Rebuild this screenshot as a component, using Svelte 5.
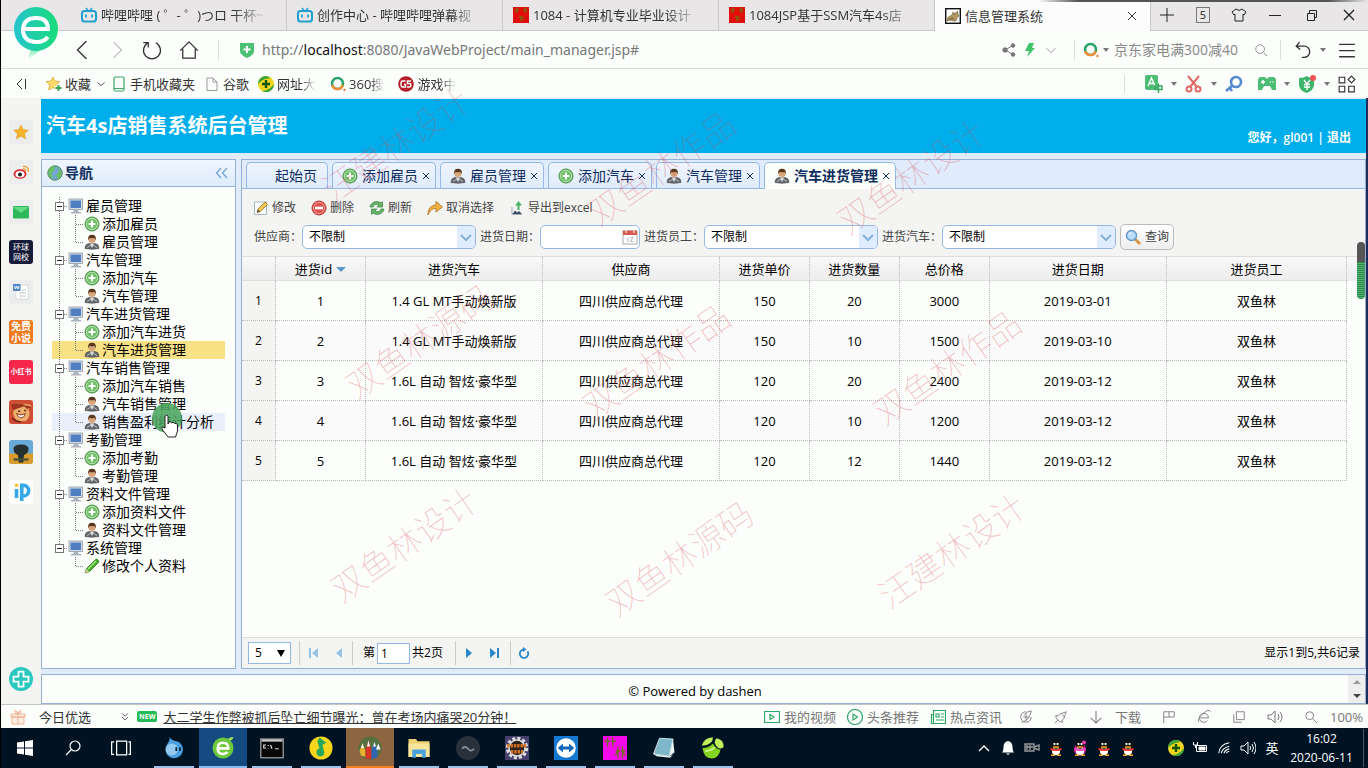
<script>
  const browserTabs = [
    { title: '哔哩哔哩 ( ゜- ゜)つロ 干杯~', icon: 'bili' },
    { title: '创作中心 - 哔哩哔哩弹幕视', icon: 'bili' },
    { title: '1084 - 计算机专业毕业设计', icon: 'redbook' },
    { title: '1084JSP基于SSM汽车4s店', icon: 'redbook' },
  ];

  const bookmarks = [
    { title: '手机收藏夹', icon: 'phone' },
    { title: '谷歌', icon: 'page' },
    { title: '网址大', icon: 'shield360', fade: true },
    { title: '360搜', icon: 'so', fade: true },
    { title: '游戏中', icon: 'game', fade: true },
  ];

  const tree = [
    { title: '雇员管理', items: [{ title: '添加雇员', icon: 'add' }, { title: '雇员管理', icon: 'user' }] },
    { title: '汽车管理', items: [{ title: '添加汽车', icon: 'add' }, { title: '汽车管理', icon: 'user' }] },
    { title: '汽车进货管理', items: [{ title: '添加汽车进货', icon: 'add' }, { title: '汽车进货管理', icon: 'user', selected: true }] },
    {
      title: '汽车销售管理',
      items: [
        { title: '添加汽车销售', icon: 'add' },
        { title: '汽车销售管理', icon: 'user' },
        { title: '销售盈利统计分析', icon: 'user', hover: true },
      ],
    },
    { title: '考勤管理', items: [{ title: '添加考勤', icon: 'add' }, { title: '考勤管理', icon: 'user' }] },
    { title: '资料文件管理', items: [{ title: '添加资料文件', icon: 'add' }, { title: '资料文件管理', icon: 'user' }] },
    { title: '系统管理', items: [{ title: '修改个人资料', icon: 'pencil' }] },
  ];

  const tabs = [
    { title: '添加雇员', icon: 'add' },
    { title: '雇员管理', icon: 'user' },
    { title: '添加汽车', icon: 'add' },
    { title: '汽车管理', icon: 'user' },
    { title: '汽车进货管理', icon: 'user' },
  ];
  let activeTab = $state(4);

  const tools = [
    { title: '修改', icon: 'edit' },
    { title: '删除', icon: 'remove' },
    { title: '刷新', icon: 'reload' },
    { title: '取消选择', icon: 'redo' },
    { title: '导出到excel', icon: 'export' },
  ];

  const rows = [
    [1, '1.4 GL MT手动焕新版', '四川供应商总代理', 150, 20, 3000, '2019-03-01', '双鱼林'],
    [2, '1.4 GL MT手动焕新版', '四川供应商总代理', 150, 10, 1500, '2019-03-10', '双鱼林'],
    [3, '1.6L 自动 智炫·豪华型', '四川供应商总代理', 120, 20, 2400, '2019-03-12', '双鱼林'],
    [4, '1.6L 自动 智炫·豪华型', '四川供应商总代理', 120, 10, 1200, '2019-03-12', '双鱼林'],
    [5, '1.6L 自动 智炫·豪华型', '四川供应商总代理', 120, 12, 1440, '2019-03-12', '双鱼林'],
  ];

  const sideApps = ['star', 'weibo', 'mail', 'school', 'word', 'novel', 'red', 'hero', 'oak', 'ip'];
  const taskApps = ['drop', 'e360', 'cmd', 'music', 'pencils', 'folder', 'wave', 'ide', 'teamviewer', 'magenta', 'notebook', 'lime'];

  const marks = [
    { text: '汪建林设计', x: 395, y: 144 },
    { text: '双鱼林作品', x: 660, y: 168 },
    { text: '双鱼林设计', x: 910, y: 176 },
    { text: '双鱼林源码', x: 418, y: 341 },
    { text: '双鱼林作品', x: 655, y: 361 },
    { text: '双鱼林作品', x: 946, y: 367 },
    { text: '双鱼林设计', x: 403, y: 544 },
    { text: '双鱼林源码', x: 678, y: 558 },
    { text: '汪建林设计', x: 951, y: 550 },
  ];
</script>

{#snippet icon(name, size = 16)}
  <svg class="icon" width={size} height={size} viewBox="0 0 16 16" fill="none" aria-hidden="true">
    {#if name === 'bili'}
      <path d="M5 1l2 2.5M11 1L9 3.5" stroke="#1f9fd0" stroke-width="1.5" />
      <rect x="1" y="4" width="14" height="10.500" rx="2.500" stroke="#1f9fd0" stroke-width="2" />
      <path d="M5 7.500v3M11 7.500v3" stroke="#1f9fd0" stroke-width="1.800" />
    {:else if name === 'redbook'}
      <rect width="16" height="16" fill="#e01008" />
      <path d="M2 2h4M2 4h3M4 2v4M10 2h4M11 4h3M12 2v4M6 10h5M8 9v5M7 12h4" stroke="#7a6a10" stroke-width="1.200" />
    {:else if name === 'cat'}
      <rect x=".7" y=".7" width="14.600" height="14.600" fill="#fff" stroke="#111" stroke-width="1.400" />
      <path d="M2 13q0-4 3-5l2-1 1-3 2 1.500 2.500-2.500.5 3 1 2-2 2-1 3H8l-3-1z" fill="#b39a62" stroke="#6e5a33" stroke-width=".6" />
      <path d="M4 12l3-2 2 1M9 6.500h1" stroke="#4a3d22" stroke-width=".8" />
    {:else if name === 'phone'}
      <rect x="3" y="1" width="10" height="14" rx="1.500" stroke="#3aa864" stroke-width="1.200" />
      <path d="M3 12.500h10" stroke="#3aa864" />
    {:else if name === 'page'}
      <path d="M3 2h6l4 4v8.500H3zM9 2v4h4" stroke="#999" />
    {:else if name === 'shield360'}
      <circle cx="8" cy="8" r="8" fill="#f2d51c" />
      <path d="M8 0a8 8 0 0 0-8 8c3-4 8-6 12-5.500C11 1 9.500 0 8 0zM16 8a8 8 0 0 1-12 7c5 0 9-3 12-7z" fill="#3aa53c" />
      <path d="M8 4v8M4 8h8" stroke="#151" stroke-width="2.400" />
    {:else if name === 'so'}
      <circle cx="7.500" cy="7.500" r="5.500" stroke="#2aa36a" stroke-width="2.600" />
      <path d="M2.200 9a5.500 5.500 0 0 0 10.600 0" stroke="#f09038" stroke-width="2.600" />
      <circle cx="14.500" cy="14" r="1.200" fill="#f08030" />
    {:else if name === 'game'}
      <circle cx="8" cy="8" r="7.800" fill="#b3202a" />
      <path d="M7.500 5H4.500Q3 5 3 8t1.500 3h3V8.500H6M13 5H9.500v2.500h2Q13 7.500 13 9.200T11.300 11H9" stroke="#fff" stroke-width="1.400" />
    {:else if name === 'favadd'}
      <path d="M7 1l2 4 5 .6-3.600 3.200 1 5L7 11.500 2.600 14l1-5L0 5.600 5 5z" fill="#fbd96a" stroke="#dba93a" stroke-width=".8" />
      <path d="M12.500 8.500v7M9 12h7" stroke="#fff" stroke-width="4" />
      <path d="M12.500 9v6M9.500 12h6" stroke="#3aa55a" stroke-width="2" />
    {:else if name === 'add'}
      <circle cx="8" cy="8" r="7" fill="#6fbf68" stroke="#4b8f49" />
      <circle cx="8" cy="8" r="5.600" stroke="#c9ebc2" stroke-width=".8" />
      <path d="M8 4.500v7M4.500 8h7" stroke="#fff" stroke-width="2" />
    {:else if name === 'remove'}
      <circle cx="8" cy="8" r="7" fill="#dc5149" stroke="#b63a33" />
      <circle cx="8" cy="8" r="5.600" stroke="#f5b5ae" stroke-width=".8" />
      <path d="M4 8h8" stroke="#fff" stroke-width="2.600" />
    {:else if name === 'user'}
      <path d="M1 14.500Q1 10 5 9.500h6q4 .5 4 5-7 1.500-14 0z" fill="#66696d" stroke="#44474a" stroke-width=".6" />
      <path d="M6 9.500l2 4.500 2-4.500z" fill="#eee" />
      <circle cx="8" cy="5.500" r="3.600" fill="#d9a67c" />
      <path d="M4.200 6Q3.500 .8 8 .8T11.800 6Q11 5.500 10.500 3.800 8 4.800 5.500 3.800 5 5.500 4.200 6z" fill="#59381d" />
      <path d="M3 13.500l4-2.500h2l4 2.500" stroke="#c2c4c6" stroke-width=".9" />
    {:else if name === 'monitor'}
      <rect x="1" y="1" width="13.500" height="10.500" fill="#d5dce4" stroke="#8f9aa8" stroke-width=".8" />
      <rect x="2.500" y="2.500" width="10.500" height="7.500" fill="#4f7fc0" />
      <path d="M6 12h4l1 2h2v1.500H3V14h2z" fill="#a9b4bf" />
    {:else if name === 'pencil'}
      <path d="M1 15l1.500-4.500L11.500 1.500q1-1 2.500 .5t.5 2.500L5.500 13.500z" fill="#47ad2a" stroke="#2b7d18" stroke-width=".8" />
      <path d="M4 11l8-8" stroke="#a9e78c" stroke-width="1.300" />
      <path d="M1 15l1.500-4 2.500 2.500z" fill="#e9d2a0" />
    {:else if name === 'edit'}
      <path d="M1.500 2h12v12.500h-12z" fill="#fff" stroke="#a5b5c5" />
      <path d="M4 12.500l1-3.500L12 2l2.500 2.500L7.500 11.500z" fill="#f3c750" stroke="#96702a" stroke-width=".8" />
      <path d="M4 12.500l1-3 2 2z" fill="#444" />
    {:else if name === 'reload'}
      <path d="M1 7c1-5 7-7 11-4l1.500-1.500V7H8l2-2C7 3.500 5 4.500 4 7zM15 9c-1 5-7 7-11 4l-1.500 1.500V9H8l-2 2c3 1.500 5 .5 6-2z" fill="#67b465" stroke="#33843c" stroke-width=".7" />
    {:else if name === 'redo'}
      <path d="M1 15c0-7 3-9.500 8-10V1.500L15.500 7 9 12V8.500c-4 0-6 2-8 6.500z" fill="#f2b441" stroke="#ab6c1d" stroke-width=".8" />
    {:else if name === 'export'}
      <path d="M3 7v7.500h10" stroke="#9badbb" />
      <path d="M8.500 10V5.500H6L9.500 1 13 5.500h-2.500V10z" fill="#49b466" />
      <path d="M3.500 14l2.500-3.500 2 2 2-1.500 3 3z" fill="#3e4d61" />
    {:else if name === 'search'}
      <path d="M10 10l5 5" stroke="#d59442" stroke-width="2.800" />
      <circle cx="6.500" cy="6.500" r="5" fill="#b8dcf5" stroke="#5f98c8" stroke-width="1.400" />
      <path d="M4 6q0-2 2.500-2.300" stroke="#fff" />
    {:else if name === 'calendar'}
      <rect x="1" y="2" width="14" height="13" fill="#fff" stroke="#a8a8a8" />
      <path d="M1 1.500h14V6H1z" fill="#d65a50" />
      <path d="M4 1v3M12 1v3" stroke="#fff" />
      <path d="M6 8.500v4.500M8.500 8.500h2.500l-2.500 4h3" stroke="#b5b5b5" />
    {:else if name === 'globe'}
      <circle cx="8" cy="8" r="7.200" fill="#75a7d5" stroke="#4a8a4e" />
      <path d="M2 4q3-4 6-2l-1 4-3 2 2 4-2 1Q0 9 2 4zM11 3l3 3v5l-3 3-2-4 3-3z" fill="#6abf5e" />
    {:else if name === 'chev'}
      <path d="M3 6l5 5 5-5" stroke="#84b3da" stroke-width="2" />
    {:else if name === 'weibo'}
      <ellipse cx="7" cy="10" rx="6.500" ry="4.800" fill="#e0303a" />
      <ellipse cx="7" cy="10.300" rx="4.500" ry="3.200" fill="#fff" />
      <circle cx="7" cy="10.500" r="2" fill="#222" />
      <path d="M10 5q3-.5 2.600 2.500M10 2.500q6-.5 5.300 5.500" stroke="#f0a02c" stroke-width="1.300" />
    {:else if name === 'mail'}
      <rect y="2" width="16" height="12.500" rx="1" fill="#2eb85c" />
      <path d="M0 3l8 6 8-6z" fill="#65db83" />
    {:else if name === 'word'}
      <rect x="3" y="1" width="12" height="14" fill="#fff" stroke="#ccc" stroke-width=".6" />
      <path d="M9 6h4M6 9h7M6 12h7" stroke="#bcc5cc" />
      <rect width="7.500" height="7" fill="#4e86c8" />
      <path d="M1.500 2l1 3 1.200-3L5 5l1-3" stroke="#fff" stroke-width=".9" />
    {:else if name === 'star'}
      <path d="M8 1l2.200 4.600 5 .6-3.700 3.500 1 5L8 12.200 3.500 14.700l1-5L.8 6.200l5-.6z" fill="#f7b32b" stroke="#e09a1c" stroke-width=".6" />
    {:else if name === 'hero'}
      <rect width="16" height="16" rx="2" fill="#cf4d33" />
      <path d="M1 3q4-2 8 0 4-1 6 1l-2 2q2 5-2 8H6Q2 11 3 6z" fill="#edb06c" />
      <path d="M1 3q5-2 11 1-6 1-9 3zM10 4q3-1 5 1l-3 1z" fill="#9c3420" />
      <path d="M5 9q3 2 6 0-1 3-3 3T5 9z" fill="#fff" stroke="#8c2f1a" stroke-width=".6" />
      <path d="M6 7.500h1.500M10 7h1.500M2 12q3 3 6 2.500" stroke="#6b2414" stroke-width="1" />
    {:else if name === 'oak'}
      <rect width="16" height="16" rx="2" fill="#69a9d8" />
      <path d="M0 9h16v5a2 2 0 0 1-2 2H2a2 2 0 0 1-2-2z" fill="#d89b2c" />
      <path d="M3 6q0-3 5-3t5 3-3 4l-.5 5h-3L6 10Q3 9 3 6z" fill="#26302f" />
      <path d="M3 13h10" stroke="#4a4f3a" stroke-width="1.500" />
    {:else if name === 'ip'}
      <rect width="16" height="16" rx="2" fill="#fff" />
      <path d="M5 6v6" stroke="#36a8e8" stroke-width="2.400" />
      <circle cx="5" cy="3.500" r="1.200" fill="#f5c02c" />
      <path d="M8.500 14V3.500h1a3.600 3.600 0 0 1 0 7.200" stroke="#36a8e8" stroke-width="2.400" />
    {:else if name === 'drop'}
      <path d="M5 .5q1 2.500 5 3a5.800 5.800 0 1 1-6.500 2Q5.500 3 5 .5z" fill="#4a9fe0" />
      <circle cx="6.500" cy="9" r="4" fill="#b5def6" opacity=".7" />
      <path d="M9.500 7.500v2.500M12 7.500v2.500" stroke="#123" stroke-width="1.100" />
    {:else if name === 'e360'}
      <circle cx="8" cy="8" r="7" fill="#6cc93c" />
      <path d="M4.500 8.300h7q0-3.800-3.500-3.800T4.500 8.300 8 12q2 0 3-1.300" stroke="#fff" stroke-width="1.800" />
      <path d="M11 2q3-2 4-1-1 2-2 2z" fill="#9be05c" />
    {:else if name === 'cmd'}
      <rect x=".5" y="2" width="15" height="12.500" fill="#080808" stroke="#888" />
      <path d="M1 3h14" stroke="#ccc" stroke-width="1.500" />
      <path d="M4 6H2.500v2H4M5.500 6v.6M5.500 8v.4M7 6l1 2.500M10 8.500h2.500" stroke="#ddd" stroke-width=".8" />
    {:else if name === 'music'}
      <circle cx="8" cy="8" r="7.700" fill="#f8d51d" />
      <path d="M7 1l4.500 3.500L9 6l1.200 5a2.600 2.600 0 1 1-3.200-2.600L5.500 3.500z" fill="#25a85c" />
    {:else if name === 'pencils'}
      <circle cx="8" cy="8" r="7.700" fill="#55713f" />
      <path d="M1 10l2-5 2 5v4l-3-1z" fill="#e8b12c" />
      <path d="M5 9l2-6 2 6v6.500L5 15z" fill="#d63426" />
      <path d="M9 9l2-5 2 5v5l-4 1.500z" fill="#2d67b4" />
      <path d="M2 8l1-3 1 3M6 7l1-4 1 4M10 7l1-3 1 3M12 9l1.500-4L15 9" fill="#fff" />
    {:else if name === 'folder'}
      <path d="M1 2h5l1 1.500h8V14H1z" fill="#f1d273" />
      <path d="M1 5h14v9H1z" fill="#f9e49b" />
      <path d="M3.500 14.500V9h9v5.500h-2.500V12H6v2.500z" fill="#4aa3dc" />
    {:else if name === 'wave'}
      <circle cx="8" cy="8" r="8" fill="#28313c" />
      <path d="M4 8.500q2-2.500 4 0t4 0" stroke="#8894a0" stroke-width="1.100" />
    {:else if name === 'ide'}
      <rect width="16" height="16" fill="#47406c" />
      <circle cx="8" cy="8" r="6.300" stroke="#ddd" stroke-width="2.400" stroke-dasharray="2 1.300" />
      <circle cx="8" cy="8" r="5.300" fill="#2a2020" stroke="#ddd" />
      <path d="M1.500 6.500h13M4 10.500h8" stroke="#d97324" stroke-width="2.400" stroke-dasharray="1.600 .6" />
    {:else if name === 'teamviewer'}
      <rect width="16" height="16" fill="#1479d0" />
      <circle cx="8" cy="8" r="6.500" fill="#fff" />
      <path d="M2.500 8L6 5v2h4V5l3.500 3L10 11V9H6v2z" fill="#1168b8" />
    {:else if name === 'magenta'}
      <rect width="16" height="16" fill="#f508ea" />
      <path d="M3 1v6M1 3.500h4M6.500 1v6M5.500 3.500h3M10 7v8M13 7v8M8.500 10h3M12 10h3M8 13l2-3M13 10l2 3" stroke="#6e6e1a" stroke-width=".9" />
    {:else if name === 'notebook'}
      <path d="M5 1.500l9 .5-2.500 11.500L1 12z" fill="#7fb7ca" stroke="#d8e8ee" stroke-width=".6" />
      <path d="M14 2l1 9-3.500 2.500z" fill="#edf4f5" />
      <path d="M1 12l10.500 1.500L14 12.500l-2 2L3 13.500z" fill="#e4ecec" />
    {:else if name === 'lime'}
      <path d="M1 8q4 0 7-3 2 4 5 4-1 6-6 6T1 8z" fill="#84d320" />
      <path d="M.5 6.500Q2 1 8 .8 8 6 .5 6.500zM10.500 1.500q5 1 4.500 6-3 2-5-1t.5-5z" fill="#bdf05a" />
      <path d="M3 10q4 0 6-2.500" stroke="#d8f79a" stroke-width="1.200" />
    {:else if name === 'qq' || name === 'qqpink'}
      <ellipse cx="8" cy="9.500" rx="6" ry="6" fill={name === 'qq' ? '#111' : '#e01fa0'} />
      <ellipse cx="8" cy="11.500" rx="4" ry="3.700" fill="#fff" />
      <circle cx="8" cy="4.500" r="4.300" fill="#111" />
      <path d="M6.500 3v2M9.500 3v2" stroke="#fff" stroke-width="1.800" />
      <path d="M5 7h6" stroke="#f3a81c" stroke-width="1.500" />
      <path d="M2.500 9q5.500 2 11 0" stroke={name === 'qq' ? '#e03028' : '#ff4ac0'} stroke-width="2.200" />
      <path d="M3 15.200h4M9 15.200h4" stroke="#f3a81c" stroke-width="1.600" />
      {#if name === 'qqpink'}<circle cx="12" cy="2.500" r="2" fill="#f03aa8" />{/if}
    {/if}
  </svg>
{/snippet}

<!-- plain outline glyphs, coloured by the parent -->
{#snippet line(d, size = 16, width = 1)}
  <svg class="icon" width={size} height={size} viewBox="0 0 16 16" fill="none" stroke="currentColor" stroke-width={width} aria-hidden="true">
    <path {d} />
  </svg>
{/snippet}

{#snippet guide(d)}
  <svg class="icon" width="16" height="18" viewBox="0 0 16 18" fill="none" stroke="#777" stroke-dasharray="1 1" aria-hidden="true">
    <path {d} />
  </svg>
{/snippet}

{#snippet combo(id, label)}
  <label for={id}>{label}：</label>
  <span class="combo">
    <select {id}><option>不限制</option></select>
    <span class="combo-arrow">{@render icon('chev')}</span>
  </span>
{/snippet}

<div class="screen">
  <header class="tabstrip">
    {#each browserTabs as tab}
      <button class="btab">{@render icon(tab.icon)}<span class="fade">{tab.title}</span></button>
    {/each}
    <button class="btab current">
      {@render icon('cat')}<span class="grow">信息管理系统</span>
      {@render line('M4 4l8 8M12 4l-8 8', 16, 1)}
    </button>
    <div class="window-tools">
      <button aria-label="新标签页">{@render line('M8 1v14M1 8h14')}</button>
      <button class="count">5</button>
      <button aria-label="皮肤">{@render line('M5 2L1 5l2 3 1-1v7h8V7l1 1 2-3-4-3Q8 5 5 2z', 16, 1)}</button>
      <button aria-label="最小化">{@render line('M2 8.500h12')}</button>
      <button aria-label="还原">{@render line('M3.500 6.500h7v7h-7zM5.500 6.500v-3h7v7h-2')}</button>
      <button aria-label="关闭">{@render line('M3 3l10 10M13 3L3 13', 16, 1.4)}</button>
    </div>
  </header>

  <div class="address">
    <div class="nav-buttons">
      <button aria-label="后退">{@render line('M12 0L4 8l8 8', 18, 1.2)}</button>
      <button class="off" aria-label="前进">{@render line('M5 1l7 7-7 7', 18)}</button>
      <button aria-label="刷新">{@render line('M5 2.200a6.800 6.800 0 1 0 6 0M5 6V2H1', 20)}</button>
      <button aria-label="主页">{@render line('M1 8.500L8 1.500l7 7M3 7v7.500h10V7', 20)}</button>
    </div>
    <svg class="icon" width="14" height="16" viewBox="0 0 14 16" aria-hidden="true">
      <path d="M0 1h14v8q0 4-7 7-7-3-7-7z" fill="#4cc174" />
      <path d="M7 4v7M3.500 7.500h7" stroke="#fff" stroke-width="2" />
    </svg>
    <div class="url">http://<b>localhost</b>:8080/JavaWebProject/main_manager.jsp#</div>
    <div class="share">
      <svg class="icon" width="14" height="14" viewBox="0 0 14 14" fill="#777" stroke="#777" aria-hidden="true">
        <path d="M11 2.500L3 7l8 4.500" fill="none" /><circle cx="11" cy="2.500" r="1.800" /><circle cx="3" cy="7" r="2.200" /><circle cx="11" cy="11.500" r="1.800" />
      </svg>
      <svg class="icon" width="12" height="14" viewBox="0 0 12 14" aria-hidden="true"><path d="M5 0h5L8 5h3L3 14l2-6H1z" fill="#3fc46a" /></svg>
      {@render line('M3 6l5 5 5-5', 14)}
    </div>
    <div class="hot">
      {@render icon('so')}<i class="caret"></i>
      <span>京东家电满300减40</span>
      {@render line('M11 11l4 4M12 7a5 5 0 1 1-10 0 5 5 0 0 1 10 0z', 14)}
    </div>
    <div class="menu">
      {@render line('M5 1L2 4.500l3.500 3M2 4.500h7a4.500 4.500 0 0 1 0 10H7', 18, 1.2)}
      <i class="caret"></i>
      {@render line('M1 3h14M1 8.500h14M1 14h14', 18, 1.2)}
    </div>
  </div>

  <nav class="bookmarks">
    {@render line('M9 3L4 8l5 5M12.500 3v10', 16)}
    <a class="fav" href="#fav">{@render icon('favadd')}收藏</a>
    {@render line('M3 6l5 4 5-4', 12)}
    {#each bookmarks as mark}
      <a href="#bookmark" class:long-title={mark.fade}>{@render icon(mark.icon)}<span class:fade-end={mark.fade}>{mark.title}</span></a>
    {/each}
    <div class="plugins">
      <svg class="icon" width="18" height="18" viewBox="0 0 18 18" fill="none" aria-hidden="true">
        <rect width="13" height="15" rx="2" fill="#4cbd74" /><path d="M3 11L6.500 3 10 11M4.500 8.500h4" stroke="#fff" stroke-width="1.500" />
        <path d="M10 11h7v3.500h-7zM13.500 8.500V18" stroke="#3aa862" stroke-width="1.500" />
      </svg>
      <i class="caret"></i>
      <svg class="icon" width="18" height="18" viewBox="0 0 18 18" fill="none" stroke="#e06a66" stroke-width="2" aria-hidden="true">
        <path d="M3 1l9 11M14 1L5 12" /><circle cx="4" cy="14" r="2.500" /><circle cx="13" cy="14" r="2.500" />
      </svg>
      <i class="caret"></i>
      <svg class="icon key" width="18" height="18" viewBox="0 0 18 18" fill="none" stroke="#5589d0" stroke-width="2.600" aria-hidden="true">
        <circle cx="11" cy="7" r="5" /><path d="M7 11l-6 5M4 12l3 4" />
      </svg>
      <svg class="icon" width="18" height="16" viewBox="0 0 18 16" aria-hidden="true">
        <path d="M2 1h5l2 2 2-2h5l2 2v11h-4l-2-4H6l-2 4H0V3z" fill="#4cbd74" /><path d="M5 4v4M3 6h4M12 6h1M14.500 6h1" stroke="#fff" stroke-width="1.500" />
      </svg>
      <i class="caret"></i>
      <svg class="icon" width="18" height="18" viewBox="0 0 18 18" fill="none" aria-hidden="true">
        <path d="M1 3q5 0 8-2 2 2 7 2v7q0 5-7.500 8Q1 15 1 10z" fill="#3fb56a" /><path d="M6 5l3 4 3-4M9 9v6M6 9.500h6M6 12h6" stroke="#fff" stroke-width="1.300" /><circle cx="15" cy="3" r="3" fill="#f05555" />
      </svg>
      <i class="caret"></i>
      {@render line('M1 2h5v5H1zM1 10h5v5H1zM9.500 10h5v5h-5zM12 1l3 3-3 3-3-3z', 18)}
    </div>
  </nav>

  <div class="workspace">
    <aside class="dock">
      {#each sideApps as app}
        <button class="app {app}" aria-label={app}>
          {#if app === 'school'}
            环球<br />网校
          {:else if app === 'novel'}
            免费<br />小说
          {:else if app === 'red'}
            小红书
          {:else}
            {@render icon(app, app === 'hero' || app === 'oak' || app === 'ip' ? 24 : 16)}
          {/if}
        </button>
      {/each}
      <button class="app plus" aria-label="添加">
        {@render line('M6 2h4v4h4v4h-4v4H6v-4H2V6h4z', 20, 1.4)}
      </button>
    </aside>

    <main>
      <div class="banner">
        <h1>汽车4s店销售系统后台管理</h1>
        <p>您好，gl001 | <a href="#logout">退出</a></p>
      </div>

      <div class="columns">
        <section class="panel nav-panel">
          <h2>{@render icon('globe')}<span class="grow">导航</span>
            <button aria-label="收起">{@render line('M7 3L2.500 8 7 13M13 3L8.500 8l4.500 5', 16, 1.4)}</button>
          </h2>
          <ul class="tree">
            {#each tree as group, g}
              <li>
                <div class="node">
                  <svg class="icon" width="16" height="18" viewBox="0 0 16 18" fill="none" aria-hidden="true">
                    <path d={g === tree.length - 1 ? 'M7.500 0v5M12 9.500h4' : 'M7.500 0v18M12 9.500h4'} stroke="#777" stroke-dasharray="1 1" />
                    <rect x="3.500" y="5.500" width="8" height="8" fill="#fff" stroke="#777" /><path d="M5 9.500h5" stroke="#222" />
                  </svg>
                  {@render icon('monitor')}<span>{group.title}</span>
                </div>
                <ul>
                  {#each group.items as item, i}
                    <li class="node" class:selected={item.selected} class:hover={item.hover}>
                      {@render guide(g === tree.length - 1 ? '' : 'M7.500 0v18')}
                      {@render guide(i === group.items.length - 1 ? 'M7.500 0v9.500h8.500' : 'M7.500 0v18M8 9.500h8')}
                      {@render icon(item.icon)}<a href="#node">{item.title}</a>
                    </li>
                  {/each}
                </ul>
              </li>
            {/each}
          </ul>
        </section>

        <section class="panel center">
          <div class="tabs">
            <button class="tab home">起始页</button>
            {#each tabs as tab, i}
              <button class="tab" class:active={i === activeTab} onclick={() => (activeTab = i)}>
                {@render icon(tab.icon)}<span>{tab.title}</span>
                {@render line('M2 2l12 12M14 2L2 14', 8, 2)}
              </button>
            {/each}
          </div>

          <div class="toolbar">
            {#each tools as tool}
              <button>{@render icon(tool.icon)}{tool.title}</button>
            {/each}
          </div>

          <form class="filters" onsubmit={(e) => e.preventDefault()}>
            {@render combo('supplier', '供应商')}
            <label for="date">进货日期：</label>
            <span class="datebox"><input id="date" type="text" />{@render icon('calendar')}</span>
            {@render combo('employee', '进货员工')}
            {@render combo('car', '进货汽车')}
            <button class="query">{@render icon('search')}查询</button>
          </form>

          <div class="grid">
            <table>
              <colgroup>
                <col class="num" /><col class="short" /><col class="long" /><col class="long" />
                <col class="short" /><col class="short" /><col class="short" /><col class="long" /><col />
              </colgroup>
              <thead>
                <tr>
                  <th></th>
                  <th>进货id<i class="sort"></i></th>
                  <th>进货汽车</th><th>供应商</th><th>进货单价</th><th>进货数量</th><th>总价格</th><th>进货日期</th><th>进货员工</th>
                </tr>
              </thead>
              <tbody>
                {#each rows as row, i}
                  <tr class:alt={i % 2 === 1}>
                    <td class="rownum">{i + 1}</td>
                    {#each row as cell}<td>{cell}</td>{/each}
                  </tr>
                {/each}
              </tbody>
            </table>
          </div>

          <div class="pager">
            <span class="size"><select aria-label="每页记录数"><option>5</option></select><i></i></span>
            <hr />
            <button class="dim" aria-label="第一页"><svg width="12" height="12" viewBox="0 0 12 12"><path d="M2 1h2v10H2zM11 1v10L5 6z" fill="currentColor" /></svg></button>
            <button class="dim" aria-label="上一页"><svg width="12" height="12" viewBox="0 0 12 12"><path d="M9 1v10L3 6z" fill="currentColor" /></svg></button>
            <hr />
            <label for="page">第</label><input id="page" type="text" value="1" /><span>共2页</span>
            <hr class="wide" />
            <button aria-label="下一页"><svg width="12" height="12" viewBox="0 0 12 12"><path d="M3 1v10l6-5z" fill="currentColor" /></svg></button>
            <button aria-label="最后一页"><svg width="12" height="12" viewBox="0 0 12 12"><path d="M8 1h2v10H8zM1 1v10l6-5z" fill="currentColor" /></svg></button>
            <hr />
            <button aria-label="刷新列表"><svg width="12" height="12" viewBox="0 0 12 12" fill="none" stroke="currentColor" stroke-width="1.800"><path d="M6 2.500a4.200 4.200 0 1 0 3.500 1.800" /><path d="M5 0l3.500 2.500L5 5z" fill="currentColor" stroke="none" /></svg></button>
            <span class="total">显示1到5,共6记录</span>
          </div>
        </section>
      </div>

      <footer class="panel powered">
        <span>© Powered by dashen</span>
        <div class="spin"><i class="up"></i><i class="down"></i></div>
      </footer>
    </main>
  </div>

  <div class="status">
    <svg class="icon" width="16" height="16" viewBox="0 0 16 16" fill="none" stroke="#efb391" aria-hidden="true"><path d="M1 5h14v3H1zM2 8h12v7H2zM8 5v10M8 5Q4 4 5 1.500 7 1 8 5q1-4 3-3.500Q12 4 8 5" fill="#fdeee4" /></svg>
    <span class="daily">今日优选</span>
    {@render line('M4 3l4 4 4-4M4 8l4 4 4-4', 12)}
    <b class="new">NEW</b>
    <a href="#news">大二学生作弊被抓后坠亡细节曝光：曾在考场内痛哭20分钟！</a>
    <div class="status-right">
      <span class="green">{@render line('M.5 2.500h15v11H.5zM6 5.500v5l4-2.500z', 16, 1.2)}</span><span>我的视频</span>
      <span class="green">{@render line('M15.500 8a7.500 7.500 0 1 1-15 0 7.500 7.500 0 0 1 15 0zM6 5v6l4.500-3z', 16, 1.2)}</span><span>头条推荐</span>
      <span class="green">{@render line('M3.500 1.500h12v13h-14v-9h2zM3.500 5v9M6 5h3v3H6zM11 5h3M11 8h3M6 11h8', 16, 1.2)}</span><span>热点资讯</span>
      <div class="glyphs">
        {@render line('M14 8A6 6 0 1 1 8 2M8 4v8M5 8h6M3 14Q12 12 14 1q-5 0-8 5', 14)}
        {@render line('M2 9l4-4 8-3-3 8-4 4zM5 11l-4 4M4 6L1 7M10 12l-1 3M9 5l3 3', 14)}
        <span class="download">{@render line('M8 1v13M2 9l6 6 6-6', 14, 1.2)}下载</span>
        {@render line('M2 15V2h12v6H2M8 2v6', 14)}
        {@render line('M4 9h9q0-5-5-5T3 9q0 5 5 5 3 0 4-2M2 14Q0 10 7 4t8-2', 14)}
        {@render line('M5 2h9v9H5zM2 5v9h9', 14)}
        {@render line('M1 6h3l4-4v12l-4-4H1zM11 5q2 3 0 6M13 3q4 5 0 10', 16)}
        <span class="zoom">{@render line('M10 10l5 5M11 6.500a4.500 4.500 0 1 1-9 0 4.500 4.500 0 0 1 9 0z', 14)}100%</span>
      </div>
    </div>
  </div>

  <div class="taskbar">
    <button aria-label="开始"><svg width="16" height="16" viewBox="0 0 16 16" fill="#fff"><path d="M0 2.500L7 1.500V7.500H0zM8 1.300L16 0v7.500H8zM0 8.500h7v6L0 13.500zM8 8.500h8V16l-8-1.300z" /></svg></button>
    <button aria-label="搜索">{@render line('M6 10l-5 5M15 6a5 5 0 1 1-10 0 5 5 0 0 1 10 0z', 16, 1.2)}</button>
    <button aria-label="任务视图">{@render line('M4.500 2.500h8v11h-8zM2.500 3H.5v10h2M14 3h1.500v10H14', 20)}</button>
    <div class="running">
      {#each taskApps as app}
        <button class={app} aria-label={app}>{@render icon(app, 24)}</button>
      {/each}
    </div>
    <div class="tray">
      <span>{@render line('M3 11l5-5 5 5', 16, 1.4)}</span>
      <span><svg width="14" height="14" viewBox="0 0 14 14" fill="#fff"><path d="M7 0q4.500 1 4.500 6l.5 4 1 1.500H1L2 10l.5-4Q2.500 1 7 0zM5 12.500h4L7 14z" /></svg></span>
      <span class="cam">{@render line('M1 4h9v7H1zM10 7l5-2v5l-5-2M3 5v5M6 5v5M2 7h7', 16, 1.4)}</span>
      <span>{@render icon('qq')}</span>
      <span>{@render icon('qqpink')}</span>
      <span>{@render icon('qq')}</span>
      <span>{@render icon('qq')}</span>
      <span class="after-gap">{@render icon('shield360')}</span>
      <span><svg width="16" height="14" viewBox="0 0 16 14" fill="none" stroke="#fff"><path d="M4.500 4.500h10v6h-10zM1.500 1v3h4V1M3.500 4v3" /><path d="M7 6h6v3H7z" fill="#fff" /></svg></span>
      <span>{@render line('M2 14Q3 4 14 2M5 14q1-6 9-8M8 14q1-4 6-5M11 14q0-2 3-2', 14, 1.2)}</span>
      <span>{@render line('M1 6h3l4-4v12l-4-4H1zM10 6q1.500 2 0 4M12 4q3 4 0 8M14 2q4 6 0 12', 16)}</span>
      <span>英</span>
      <time>16:02<br />2020-06-11</time>
    </div>
  </div>

  <svg class="logo" width="46" height="44" viewBox="0 0 46 44" fill="none" aria-hidden="true">
    <defs>
      <linearGradient id="pin" x1="0" y1="0" x2="1" y2="0"><stop offset="0" stop-color="#25c4cf" /><stop offset="1" stop-color="#19dc78" /></linearGradient>
      <linearGradient id="tail" x1="0" y1="0" x2="0" y2="1"><stop offset="0" stop-color="#19dc78" /><stop offset="1" stop-color="#19dc78" stop-opacity="0" /></linearGradient>
    </defs>
    <path d="M20 38L14 53 42 33z" fill="url(#tail)" />
    <circle cx="23" cy="22" r="22" fill="url(#pin)" />
    <path d="M11 22h24q0-11-12-11T10 22q0 13 14 13 7 0 11-5" stroke="#fff" stroke-width="4" />
  </svg>

  <div class="watermarks" aria-hidden="true">
    {#each marks as mark}
      <span style="left:{mark.x}px;top:{mark.y}px">{mark.text}</span>
    {/each}
  </div>

  <svg class="pointer" width="32" height="38" viewBox="0 0 32 38" aria-hidden="true">
    <circle cx="16" cy="16" r="15" fill="#46a35a" opacity=".85" />
    <path d="M14 14q2-2 3 0v8l1-2q2-1 2.500 1 2-2 3 .5 2.500-1 3 1.500v6l-2 6H17l-6-8q-1-3 3-1z" fill="#fff" stroke="#222" />
  </svg>
  <div class="meter"></div>
  <div class="top-shade"></div>
</div>

<style>
  :global(body) {
    margin: 0;
    background: #001323;
  }

  .screen {
    position: relative;
    box-sizing: border-box;
    min-height: 100vh;
    display: flex;
    flex-direction: column;
    overflow: hidden;
    border-left: 1px solid #000;
    background: #fcfefc;
    color: #000;
    font: 13px/18px 'Open Sans', 'Noto Sans CJK SC', sans-serif;
  }

  button, input, select {
    font: inherit;
    color: inherit;
    margin: 0;
    padding: 0;
    border: 0;
    background: none;
  }

  button {
    cursor: pointer;
  }

  a {
    color: inherit;
    text-decoration: none;
  }

  ul {
    list-style: none;
    margin: 0;
    padding: 0;
  }

  .icon {
    display: block;
    flex: none;
  }

  .grow {
    flex: 1;
    text-align: left;
  }

  .caret {
    border: 3px solid transparent;
    border-top: 4px solid #777;
    border-bottom: 0;
  }

  /* browser chrome */
  .tabstrip {
    display: flex;
    height: 30px;
    padding-left: 70px;
    border-bottom: 1px solid #c8c8c8;
    background: #e8e6e6;
    color: #333;
  }

  .btab {
    display: flex;
    align-items: center;
    gap: 4px;
    flex: 0 1 216px;
    box-sizing: border-box;
    min-width: 0;
    padding: 0 10px;
    border-right: 1px solid #c8c8c8;
    white-space: nowrap;
  }

  .btab.current {
    margin-bottom: -1px;
    background: #fcfcfc;
  }

  .fade {
    flex: 0 1 166px;
    text-align: left;
    mask-image: linear-gradient(90deg, #000 80%, transparent);
  }

  .fade-end {
    mask-image: linear-gradient(90deg, #000 60%, transparent);
  }

  .window-tools {
    display: flex;
    flex: 1;
    align-items: center;
    justify-content: space-between;
    padding: 0 11px 0 8px;
    color: #222;
  }

  .count {
    width: 14px;
    height: 16px;
    border: 1px solid #777;
    font-size: 11px;
    line-height: 14px;
  }

  .address {
    display: flex;
    align-items: center;
    gap: 8px;
    height: 37px;
    padding-right: 12px;
    border-bottom: 1px solid #d8dad8;
    color: #333;
  }

  .nav-buttons {
    display: flex;
    align-items: center;
    justify-content: space-between;
    width: 126px;
    margin-left: 72px;
    padding-right: 19px;
    border-right: 1px solid #ddd;
    margin-right: 13px;
  }

  .off {
    color: #bbb;
  }

  .url {
    flex: 1;
    color: #777;
    font-family: 'Noto Sans', sans-serif;
    font-size: 14px;
  }

  .url b {
    color: #111;
    font-weight: 400;
  }

  .share, .hot, .menu {
    display: flex;
    align-items: center;
    gap: 8px;
    height: 20px;
    color: #888;
  }

  .share {
    padding-right: 8px;
  }

  .hot {
    gap: 4px;
    padding-left: 8px;
    padding-right: 12px;
    border-left: 1px solid #ddd;
    border-right: 1px solid #ddd;
  }

  .hot span {
    margin: 0 12px 0 1px;
    font-size: 14px;
  }

  .menu {
    padding-left: 5px;
    color: #333;
  }

  .menu .caret {
    margin-right: 4px;
  }

  .bookmarks {
    display: flex;
    align-items: center;
    gap: 4px;
    height: 29px;
    padding: 0 12px 0 12px;
    color: #333;
  }

  .bookmarks a {
    display: flex;
    align-items: center;
    gap: 3px;
    margin-right: 5px;
  }

  .bookmarks .fav {
    margin: 0 0 0 13px;
  }

  .bookmarks .long-title {
    margin-right: 10px;
  }

  .plugins {
    display: flex;
    align-items: center;
    gap: 8px;
    margin-left: auto;
    padding-left: 20px;
    border-left: 1px solid #ddd;
  }

  .key {
    margin-right: 7px;
  }

  .workspace {
    display: flex;
    flex: 1;
  }

  .dock {
    display: flex;
    flex-direction: column;
    align-items: center;
    gap: 16px;
    width: 40px;
    padding: 22px 0 13px;
    box-sizing: border-box;
    background: #f4f4f3;
  }

  .app {
    display: grid;
    place-items: center;
    width: 24px;
    height: 24px;
    border-radius: 3px;
    background: #eceded;
    color: #fff;
    font-size: 8px;
    line-height: 10px;
  }

  .school {
    display: block;
    background: #151b38;
  }

  .novel {
    display: block;
    background: #f07a22;
    font-size: 10px;
    font-weight: 700;
    line-height: 12px;
  }

  .red {
    background: #f5274b;
    font-size: 7px;
    font-weight: 700;
    white-space: nowrap;
  }

  .plus {
    margin-top: auto;
    border-radius: 50%;
    background: #2bc8c0;
  }

  /* web page */
  main {
    display: flex;
    flex: 1;
    flex-direction: column;
    min-width: 0;
    border-right: 2px solid #1d2d5a;
    background: #e0ecf9;
  }

  .banner {
    display: flex;
    justify-content: space-between;
    height: 54px;
    margin-top: 1px;
    padding: 0 15px 0 5px;
    background: #00aeec;
    color: #fff;
  }

  .banner h1 {
    margin: 12px 0 0;
    font-size: 20px;
    line-height: 30px;
  }

  .banner p {
    margin: 0;
    align-self: flex-end;
    padding-bottom: 6px;
    font-size: 12px;
    font-weight: 600;
  }

  .columns {
    display: flex;
    flex: 1;
    gap: 5px;
    padding: 6px 0 5px;
  }

  .panel {
    box-sizing: border-box;
    border: 1px solid #95b0d2;
    background: #fcfefc;
  }

  .nav-panel {
    width: 195px;
    flex: none;
  }

  .nav-panel h2 {
    display: flex;
    align-items: center;
    gap: 2px;
    height: 26px;
    margin: 0;
    padding: 0 5px;
    border-bottom: 1px solid #95b0d2;
    background: linear-gradient(#eff6ff, #dfebfb);
    color: #0e2d5f;
    font-size: 14px;
  }

  .nav-panel h2 button {
    color: #7ba3d4;
  }

  .tree {
    padding: 10px;
    font-size: 14px;
  }

  .node {
    display: flex;
    align-items: center;
    height: 18px;
    white-space: nowrap;
  }

  .node > :last-child {
    margin-left: 2px;
  }

  .selected {
    background: #f8e185;
  }

  .hover {
    background: #eaf0fb;
  }

  .center {
    display: flex;
    flex: 1;
    flex-direction: column;
    min-width: 0;
  }

  .tabs {
    display: flex;
    gap: 4px;
    padding: 2px 4px 0;
    border-bottom: 1px solid #95b8e7;
    background: #e0ecfb;
    color: #0e2d5f;
    font-size: 14px;
  }

  .tab {
    display: flex;
    align-items: center;
    height: 26px;
    padding: 0 5px 0 9px;
    border: 1px solid #95b8e7;
    border-bottom: 0;
    border-radius: 5px 5px 0 0;
    background: linear-gradient(#eff5ff, #dfebfb);
    white-space: nowrap;
  }

  .tab span {
    margin: 0 4px;
  }

  .tab.home {
    padding: 0 10px 0 28px;
  }

  .tab.active {
    height: 27px;
    margin-bottom: -1px;
    background: #fcfefc;
    font-weight: 700;
  }

  .toolbar {
    display: flex;
    gap: 15px;
    padding: 10px 11px 5px;
    background: #f4f4f3;
    color: #444;
    font-size: 12px;
  }

  .toolbar button {
    display: flex;
    align-items: center;
    gap: 3px;
  }

  .filters {
    display: flex;
    align-items: center;
    padding: 2px 12px 6px;
    background: #f4f4f3;
    color: #444;
    font-size: 12px;
    white-space: nowrap;
  }

  .filters label {
    line-height: 24px;
  }

  .combo {
    display: grid;
    width: 174px;
    margin-right: 4px;
    border: 1px solid #95b8e7;
    border-radius: 5px;
    box-sizing: border-box;
    overflow: hidden;
    background: #fff;
    color: #000;
  }

  .combo select {
    grid-area: 1 / 1;
    height: 22px;
    padding: 0 6px;
    appearance: none;
  }

  .combo-arrow {
    grid-area: 1 / 1;
    display: grid;
    align-items: center;
    justify-self: end;
    padding: 0 1px;
    background: #e0ecff;
    pointer-events: none;
  }

  .datebox {
    display: flex;
    align-items: center;
    width: 100px;
    height: 24px;
    margin-right: 4px;
    padding-right: 1px;
    box-sizing: border-box;
    border: 1px solid #95b8e7;
    border-radius: 5px;
    background: #fff;
  }

  .datebox input {
    flex: 1;
    min-width: 0;
    padding-left: 6px;
  }

  .query {
    display: flex;
    align-items: center;
    gap: 4px;
    height: 26px;
    padding: 0 4px;
    border: 1px solid #bbb;
    border-radius: 5px;
    background: linear-gradient(#fff, #eee);
  }

  .grid {
    flex: 1;
    background: linear-gradient(#f8f8f8, #ececec 24px, #fcfefc 24px);
    border-top: 1px solid #ddd;
  }

  table {
    width: calc(100% - 18px);
    table-layout: fixed;
    border-collapse: separate;
    border-spacing: 0;
    text-align: center;
  }

  .num { width: 34px; }
  .short { width: 8.14%; }
  .long { width: 16.02%; }

  th, td {
    box-sizing: border-box;
    padding: 0;
    border-right: 1px dotted #bbb;
    border-bottom: 1px dotted #bbb;
    white-space: nowrap;
  }

  th {
    height: 24px;
    border-bottom: 1px solid #ddd;
    font-weight: 400;
  }

  td {
    height: 40px;
  }

  .alt {
    background: #fafafa;
  }

  .rownum {
    background: #f4f4f3;
    font-size: 12px;
  }

  .sort {
    display: inline-block;
    margin-left: 4px;
    border: 5px solid transparent;
    border-top-color: #5d9ac8;
    border-bottom: 0;
    vertical-align: 2px;
  }

  .pager {
    display: flex;
    align-items: center;
    height: 30px;
    padding: 0 5px 0 6px;
    border-top: 1px solid #ddd;
    background: #f4f4f3;
    font-size: 12px;
  }

  .size {
    display: grid;
    align-items: center;
    width: 43px;
    box-sizing: border-box;
    border: 1px solid #95b8e7;
    background: #fff;
  }

  .size select {
    grid-area: 1 / 1;
    height: 20px;
    padding-left: 6px;
    appearance: none;
  }

  .size i {
    grid-area: 1 / 1;
    justify-self: end;
    margin-right: 5px;
    border: 4px solid transparent;
    border-top: 7px solid #000;
    border-bottom: 0;
    pointer-events: none;
  }

  .pager hr {
    width: 1px;
    height: 24px;
    margin: 0 0 0 8px;
    border: 0;
    background: #ccc;
  }

  .pager .dim + hr {
    margin-left: 0;
  }

  .pager hr.wide {
    margin-left: 12px;
  }

  .pager button + hr {
    margin-left: 2px;
  }

  .pager button {
    display: grid;
    place-items: center;
    width: 26px;
    height: 24px;
    color: #2a88c8;
  }

  .pager .dim {
    color: #94c3e3;
  }

  .pager label {
    margin-left: 10px;
  }

  .pager input {
    width: 33px;
    height: 21px;
    margin: 0 2px;
    padding: 0 3px;
    box-sizing: border-box;
    border: 1px solid #95b8e7;
    background: #fff;
  }

  .total {
    margin-left: auto;
  }

  .powered {
    display: flex;
    height: 30px;
  }

  .powered > span {
    flex: 1;
    padding-top: 7px;
    line-height: 18px;
    text-align: center;
  }

  .spin {
    display: flex;
    flex-direction: column;
    align-items: center;
    justify-content: space-around;
    width: 17px;
    background: #eee;
  }

  .up, .down {
    border: 4px solid transparent;
  }

  .up {
    border-top: 0;
    border-bottom-color: #999;
  }

  .down {
    border-bottom: 0;
    border-top-color: #444;
  }

  .status {
    display: flex;
    align-items: center;
    gap: 6px;
    height: 23px;
    padding: 0 5px 0 9px;
    border-top: 1px solid #c5c5c5;
    color: #333;
    white-space: nowrap;
  }

  .daily {
    margin: 0 22px 0 7px;
  }

  .status a {
    text-decoration: underline;
  }

  .new {
    padding: 0 2px;
    border-radius: 2px;
    background: #22bb55;
    color: #fff;
    font-size: 7px;
    line-height: 11px;
  }

  .status-right {
    display: flex;
    align-items: center;
    gap: 4px;
    margin-left: auto;
    color: #777;
  }

  .green {
    margin-left: 7px;
    color: #2da866;
  }

  .glyphs {
    display: flex;
    align-items: center;
    gap: 21px;
    margin-left: 13px;
  }

  .download, .zoom {
    display: flex;
    align-items: center;
    gap: 12px;
  }

  .taskbar {
    display: flex;
    height: 40px;
    background: #001323;
    color: #fff;
  }

  .taskbar button {
    display: grid;
    place-items: center;
    width: 48px;
  }

  .running {
    display: flex;
    gap: 1px;
    margin-left: 5px;
  }

  .running button {
    background: linear-gradient(#9fc3e8, #9fc3e8) bottom / 40px 2px no-repeat;
  }

  .running .e360 {
    background: linear-gradient(#134a80 38px, #85bdf0 38px);
  }

  .running .pencils {
    background: linear-gradient(#8d6540 38px, #f57d1c 38px);
  }

  .tray {
    display: flex;
    align-items: center;
    margin-left: auto;
    padding-right: 4px;
  }

  .tray span {
    display: grid;
    place-items: center;
    width: 24px;
  }

  .tray .after-gap {
    margin-left: 24px;
  }

  .cam {
    color: #999;
  }

  time {
    width: 75px;
    padding-right: 4px;
    border-right: 1px solid #456;
    font-size: 12px;
    line-height: 19px;
    text-align: center;
  }

  /* things floating over the desktop */
  .logo {
    position: absolute;
    left: 12px;
    top: 7px;
    overflow: visible;
  }

  .watermarks {
    position: absolute;
    inset: 0;
    pointer-events: none;
  }

  .watermarks span {
    position: absolute;
    color: rgba(215, 70, 80, 0.32);
    font-size: 34px;
    font-weight: 100;
    line-height: 40px;
    white-space: nowrap;
    transform: translate(-50%, -50%) rotate(-35deg);
  }

  .pointer {
    position: absolute;
    left: 150px;
    top: 402px;
    pointer-events: none;
  }

  .meter {
    position: absolute;
    right: 3px;
    top: 242px;
    width: 8px;
    height: 57px;
    border-radius: 4px;
    background: linear-gradient(#555 20px, transparent 20px), repeating-linear-gradient(#2d8a4c 0 1px, #54b070 1px 2px);
  }

  .top-shade {
    position: absolute;
    top: 0;
    right: 0;
    width: 330px;
    height: 2px;
    background: linear-gradient(90deg, transparent, #555 40px, #555 290px, transparent);
  }
</style>
